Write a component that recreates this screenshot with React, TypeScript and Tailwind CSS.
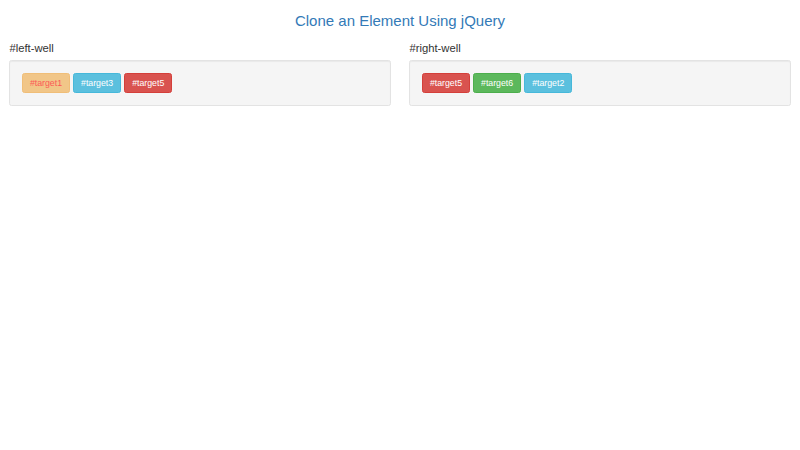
import React from 'react';

type Target = { id: string; tone: 'warning' | 'info' | 'danger' | 'success'; disabled?: boolean };

const toneClass: Record<Target['tone'], string> = {
  warning: 'bg-[#f0ad4e] border-[#eea236]',
  info: 'bg-[#5bc0de] border-[#46b8da]',
  danger: 'bg-[#d9534f] border-[#d43f3a]',
  success: 'bg-[#5cb85c] border-[#4cae4c]',
};

const leftWell: Target[] = [
  { id: 'target1', tone: 'warning', disabled: true },
  { id: 'target3', tone: 'info' },
  { id: 'target5', tone: 'danger' },
];

const rightWell: Target[] = [
  { id: 'target5', tone: 'danger' },
  { id: 'target6', tone: 'success' },
  { id: 'target2', tone: 'info' },
];

const TargetButton = ({ target }: { target: Target }) => (
  <button
    className={`border rounded-[2.5px] px-[7px] py-[3px] text-[8.75px] leading-[12.5px] ${toneClass[target.tone]} ${
      target.disabled ? 'opacity-65 text-[#ff0000]' : 'text-white'
    }`}
  >
    #{target.id}
  </button>
);

const Well = ({ name, targets }: { name: string; targets: Target[] }) => (
  <div className="px-[9.4px]">
    <h4 className="text-[11.25px] leading-[12.4px] text-[#333] mt-[6.25px] mb-[6.25px]">#{name}</h4>
    <div className="bg-[#f5f5f5] border border-[#e3e3e3] rounded-[2.5px] p-[11.5px] shadow-[inset_0_1px_1px_rgba(0,0,0,0.05)] flex gap-[3px]">
      {targets.map((t, i) => (
        <TargetButton key={i} target={t} />
      ))}
    </div>
  </div>
);

export default function App() {
  return (
    <div className="w-[800px] h-[450px] bg-white px-0 font-['Liberation_Sans',Arial,sans-serif]">
      <h3 className="text-center text-[#337ab7] text-[15px] leading-[16.5px] pt-[12.5px] mb-[6.25px]">
        Clone an Element Using jQuery
      </h3>
      <div className="grid grid-cols-2">
        <Well name="left-well" targets={leftWell} />
        <Well name="right-well" targets={rightWell} />
      </div>
    </div>
  );
}
